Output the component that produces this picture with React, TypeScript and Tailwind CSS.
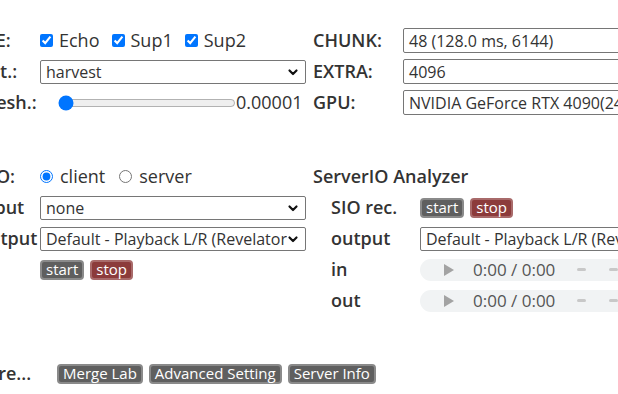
import React from "react";

const font = { fontFamily: '"Open Sans", "Noto Sans", sans-serif' };

function Chevron() {
  return (
    <svg width="12" height="12" viewBox="0 0 12 12" className="shrink-0 pointer-events-none">
      <path d="M2.5 4.5 L6 8 L9.5 4.5" fill="none" stroke="#111" strokeWidth="2.2" strokeLinecap="round" strokeLinejoin="round" />
    </svg>
  );
}

function Select({ value }: { value: string }) {
  return (
    <div className="flex items-center h-[24px] w-[266px] border border-[#767676] rounded-[2px] bg-white pl-[5px] pr-[6px]">
      <select className="appearance-none flex-1 min-w-0 bg-transparent outline-none text-[16px] text-[#333] overflow-hidden" defaultValue={value}>
        <option>{value}</option>
      </select>
      <Chevron />
    </div>
  );
}

function TextBox({ value }: { value: string }) {
  return (
    <div className="flex items-center h-[25px] w-[266px] border border-[#767676] rounded-[2px] bg-white px-[5px] text-[16px] text-[#333] whitespace-nowrap overflow-hidden">
      {value}
    </div>
  );
}

function SmallBtn({ label, tone }: { label: string; tone: "gray" | "red" }) {
  const c = tone === "gray" ? "bg-[#5f5f5f] border-[#8a8a8a]" : "bg-[#8c3b3b] border-[#a86a6a]";
  return (
    <span className={`inline-flex items-center h-[20px] px-[4px] rounded-[4px] border-2 text-white text-[15px] leading-none font-medium ${c}`}>
      {label}
    </span>
  );
}

function Player() {
  return (
    <div className="flex items-center h-[22px] w-[266px] rounded-full bg-[#f1f3f4] pl-[24px] text-[17px] text-[#555] whitespace-nowrap">
      <svg width="10" height="12" viewBox="0 0 10 12" className="shrink-0">
        <path d="M0 0 L10 6 L0 12 Z" fill="#a3a3a3" />
      </svg>
      <span className="ml-[19px]">0:00 / 0:00</span>
      <span className="ml-[22px] w-[9px] h-[3px] bg-[#c8c8c8] rounded" />
      <span className="ml-[23px] w-[9px] h-[3px] bg-[#c8c8c8] rounded" />
    </div>
  );
}

function Check({ label, className = "" }: { label: string; className?: string }) {
  return (
    <label className={`flex items-center ${className}`}>
      <input type="checkbox" defaultChecked className="w-[13px] h-[13px] m-0 accent-[#0075ff]" />
      <span className="ml-[6px] text-[18px] text-[#333]">{label}</span>
    </label>
  );
}

function Radio({ label, checked, className = "" }: { label: string; checked?: boolean; className?: string }) {
  return (
    <label className={`flex items-center ${className}`}>
      <input type="radio" name="audio" defaultChecked={checked} className="w-[13px] h-[13px] m-0 accent-[#0075ff]" />
      <span className="ml-[7px] text-[18px] text-[#333]">{label}</span>
    </label>
  );
}

export default function App() {
  const lbl = "text-[18px] font-semibold text-[#333] whitespace-nowrap";
  return (
    <div className="w-[618px] h-[394px] overflow-hidden bg-white" style={font}>
      <div className="ml-[-48px] w-[760px] pt-[25px]">
        {/* top settings */}
        <div className="flex items-center h-[31px]">
          <div className={`w-[88px] ${lbl}`}>NOISE:</div>
          <div className="w-[266px] flex items-center">
            <Check label="Echo" />
            <Check label="Sup1" className="ml-[12px]" />
            <Check label="Sup2" className="ml-[12px]" />
          </div>
          <div className={`ml-[7px] w-[90px] ${lbl}`}>CHUNK:</div>
          <TextBox value="48 (128.0 ms, 6144)" />
        </div>
        <div className="flex items-center h-[31px]">
          <div className={`w-[88px] ${lbl}`}>F0 Det.:</div>
          <Select value="harvest" />
          <div className={`ml-[7px] w-[90px] ${lbl}`}>EXTRA:</div>
          <TextBox value="4096" />
        </div>
        <div className="flex items-center h-[31px]">
          <div className={`w-[88px] ${lbl}`}>S.Thresh.:</div>
          <div className="w-[266px] flex items-center">
            <input type="range" defaultValue={0} className="ml-[18px] w-[178px] m-0 accent-[#0075ff]" />
            <span className="text-[18px] text-[#333]">0.00001</span>
          </div>
          <div className={`ml-[7px] w-[90px] ${lbl}`}>GPU:</div>
          <TextBox value="NVIDIA GeForce RTX 4090(24G)" />
        </div>

        {/* audio io */}
        <div className="flex items-center h-[31px] mt-[43px]">
          <div className={`w-[88px] ${lbl}`}>AUDIO:</div>
          <div className="w-[266px] flex items-center">
            <Radio label="client" checked />
            <Radio label="server" className="ml-[14px]" />
          </div>
          <div className={`ml-[7px] ${lbl}`}>ServerIO Analyzer</div>
        </div>
        <div className="flex items-center h-[31px]">
          <div className={`w-[88px] pl-[26px] ${lbl}`}>input</div>
          <Select value="none" />
          <div className={`ml-[25px] w-[89px] ${lbl}`}>SIO rec.</div>
          <div className="flex items-center gap-[6px]">
            <SmallBtn label="start" tone="gray" />
            <SmallBtn label="stop" tone="red" />
          </div>
        </div>
        <div className="flex items-center h-[31px]">
          <div className={`w-[88px] pl-[26px] ${lbl}`}>output</div>
          <Select value="Default - Playback L/R (Revelator io 24)" />
          <div className={`ml-[25px] w-[89px] ${lbl}`}>output</div>
          <Select value="Default - Playback L/R (Revelator io 24)" />
        </div>
        <div className="flex items-center h-[31px]">
          <div className="w-[88px]" />
          <div className="w-[266px] flex items-center gap-[6px]">
            <SmallBtn label="start" tone="gray" />
            <SmallBtn label="stop" tone="red" />
          </div>
          <div className={`ml-[25px] w-[89px] ${lbl}`}>in</div>
          <Player />
        </div>
        <div className="flex items-center h-[31px]">
          <div className="w-[88px]" />
          <div className="w-[266px]" />
          <div className={`ml-[25px] w-[89px] ${lbl}`}>out</div>
          <Player />
        </div>

        {/* more */}
        <div className="flex items-center h-[31px] mt-[42px]">
          <div className={`w-[105px] pl-[18px] ${lbl}`}>more...</div>
          <div className="flex items-center gap-[6px]">
            <SmallBtn label="Merge Lab" tone="gray" />
            <SmallBtn label="Advanced Setting" tone="gray" />
            <SmallBtn label="Server Info" tone="gray" />
          </div>
        </div>
      </div>
    </div>
  );
}
